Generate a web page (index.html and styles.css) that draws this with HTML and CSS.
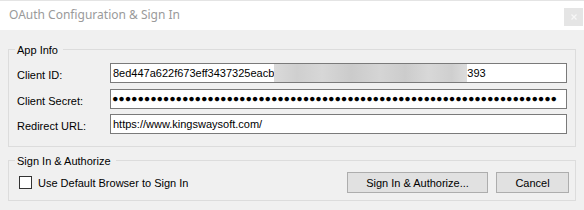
FILE: index.html
```html
<!DOCTYPE html>
<html lang="en">
<head>
<meta charset="utf-8">
<title>OAuth Configuration &amp; Sign In</title>
<link rel="stylesheet" href="styles.css">
</head>
<body>
<div class="window">
  <header class="titlebar">
    <span class="title">OAuth Configuration &amp; Sign In</span>
    <span class="close" aria-label="Close">
      <svg width="6" height="6" viewBox="0 0 6 6"><path d="M0.5 0.5 L5.5 5.5 M5.5 0.5 L0.5 5.5" stroke="#f7f7f7" stroke-width="1.2" fill="none"/></svg>
    </span>
  </header>
  <main class="content">
    <fieldset class="group app-info">
      <legend>App Info</legend>
      <div class="form-grid">
        <label class="field-label">Client ID:</label>
        <div class="textbox">8ed447a622f673eff3437325eacb<span class="redacted"></span>393</div>
        <label class="field-label">Client Secret:</label>
        <div class="textbox password">●●●●●●●●●●●●●●●●●●●●●●●●●●●●●●●●●●●●●●●●●●●●●●●●●●●●●●●●●●●●●●●●●●●●●●</div>
        <label class="field-label">Redirect URL:</label>
        <div class="textbox">https://www.kingswaysoft.com/</div>
      </div>
    </fieldset>
    <fieldset class="group sign-in">
      <legend>Sign In &amp; Authorize</legend>
      <div class="signin-row">
        <label class="check"><span class="checkbox"></span>Use Default Browser to Sign In</label>
        <div class="buttons">
          <button class="btn btn-signin">Sign In &amp; Authorize...</button>
          <button class="btn btn-cancel">Cancel</button>
        </div>
      </div>
    </fieldset>
  </main>
</div>
</body>
</html>
```
FILE: styles.css
```css
html, body {
  margin: 0;
  padding: 0;
}
body {
  width: 584px;
  height: 210px;
  overflow: hidden;
  background: #f0f0f0;
  font-family: "Liberation Sans", Arial, sans-serif;
  font-size: 11px;
  color: #000;
}
.window {
  width: 584px;
  height: 210px;
}
.titlebar {
  box-sizing: border-box;
  height: 30px;
  border-top: 1px solid #e4e4e4;
  background: #fff;
  display: flex;
  align-items: flex-start;
  justify-content: space-between;
}
.title {
  font-family: "Noto Sans", "Open Sans", sans-serif;
  font-size: 12px;
  line-height: 16px;
  color: #9a9a9a;
  margin: 6px 0 0 9px;
}
.close {
  width: 19px;
  height: 18px;
  margin: 7px 1px 0 0;
  background: #e5e5e5;
  display: flex;
  align-items: center;
  justify-content: center;
}
.close svg {
  display: block;
}
.content {
  padding: 0 8px;
}
.group {
  margin: 0;
  border: 1px solid #dcdcdc;
  min-width: 0;
}
.group legend {
  font-size: 11px;
  line-height: 13px;
  padding: 2px 5px 0 2px;
}
.app-info {
  margin-top: 12px;
  padding: 6px 8px 11px 6px;
}
.form-grid {
  display: grid;
  grid-template-columns: 93px 457px;
  grid-template-rows: 20px 20px 20px;
  row-gap: 6px;
  padding-left: 2px;
}
.form-grid .textbox:last-child {
  margin-top: -1px;
}
.form-grid .field-label:nth-last-child(2) {
  margin-top: -1px;
}
.field-label {
  line-height: 20px;
  padding-top: 2px;
  white-space: nowrap;
}
.textbox {
  box-sizing: border-box;
  height: 20px;
  border: 1px solid #7a7a7a;
  background: #fff;
  padding: 0 2px;
  line-height: 18px;
  white-space: nowrap;
  overflow: hidden;
}
.redacted {
  display: inline-block;
  vertical-align: top;
  width: 193px;
  height: 18px;
  background: linear-gradient(90deg, #dadada 0%, #cfcfcf 12%, #d7d7d7 25%, #cbcbcb 40%, #d5d5d5 55%, #cccccc 68%, #d8d8d8 80%, #cfcfcf 92%, #dcdcdc 100%);
}
.password {
  font-family: "DejaVu Sans Mono", monospace;
  font-size: 7.5px;
  letter-spacing: 1.84px;
}
.sign-in {
  margin-top: 6px;
  padding: 4px 6px 7px 6px;
}
.signin-row {
  display: flex;
  align-items: center;
  justify-content: space-between;
}
.check {
  display: flex;
  align-items: center;
  gap: 6px;
  margin-left: 4px;
  white-space: nowrap;
}
.checkbox {
  box-sizing: border-box;
  width: 13px;
  height: 13px;
  border: 1px solid #333;
  background: #fff;
}
.buttons {
  display: flex;
  gap: 8px;
}
.btn {
  box-sizing: border-box;
  height: 21px;
  margin: 0;
  padding: 0;
  border: 1px solid #adadad;
  background: #e1e1e1;
  font-family: "Liberation Sans", Arial, sans-serif;
  font-size: 11px;
  color: #000;
}
.btn-signin {
  width: 141px;
}
.btn-cancel {
  width: 73px;
}
```
